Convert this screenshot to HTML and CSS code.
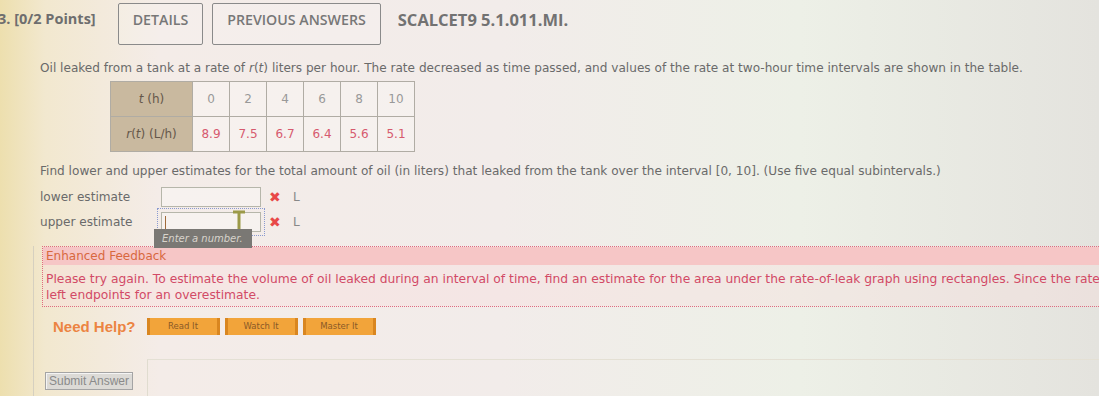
FILE: index.html
```html
<!DOCTYPE html>
<html>
<head>
<meta charset="utf-8">
<link rel="stylesheet" href="styles.css">
</head>
<body>
<div class="page">
  <div class="head">
    <span class="qnum">3. [0/2 Points]</span>
    <span class="hbtn">DETAILS</span>
    <span class="hbtn">PREVIOUS ANSWERS</span>
    <span class="code">SCALCET9 5.1.011.MI.</span>
  </div>

  <div class="content">
    <p class="intro">Oil leaked from a tank at a rate of <i>r</i>(<i>t</i>) liters per hour. The rate decreased as time passed, and values of the rate at two-hour time intervals are shown in the table.</p>

    <table class="data">
      <tr>
        <th><i>t</i> (h)</th>
        <td>0</td><td>2</td><td>4</td><td>6</td><td>8</td><td>10</td>
      </tr>
      <tr>
        <th><i>r</i>(<i>t</i>) (L/h)</th>
        <td class="val">8.9</td><td class="val">7.5</td><td class="val">6.7</td><td class="val">6.4</td><td class="val">5.6</td><td class="val">5.1</td>
      </tr>
    </table>

    <p class="find">Find lower and upper estimates for the total amount of oil (in liters) that leaked from the tank over the interval [0, 10]. (Use five equal subintervals.)</p>

    <div class="answers">
      <div class="arow">
        <span class="alabel">lower estimate</span>
        <span class="afield"><span class="input"></span></span>
        <span class="xmark">&#x2716;</span>
        <span class="unit">L</span>
      </div>
      <div class="arow">
        <span class="alabel">upper estimate</span>
        <span class="afield focus">
          <span class="input"><span class="caret"></span></span>
          <svg class="ibeam" width="14" height="30" viewBox="0 0 14 30"><path d="M1 2h12M7 2v26M1 28h12" stroke="#9c9a48" stroke-width="3" fill="none"/></svg>
          <span class="tip">Enter a number.</span>
        </span>
        <span class="xmark">&#x2716;</span>
        <span class="unit">L</span>
      </div>
    </div>
  </div>

  <div class="lower">
    <div class="feedback">
      <div class="fbhead">Enhanced Feedback</div>
      <div class="fbtext">Please try again. To estimate the volume of oil leaked during an interval of time, find an estimate for the area under the rate-of-leak graph using rectangles. Since the rate is decreasing, use right endpoints for an underestimate and<br>left endpoints for an overestimate.</div>
    </div>

    <div class="help">
      <span class="needhelp">Need Help?</span>
      <span class="hb">Read It</span>
      <span class="hb">Watch It</span>
      <span class="hb">Master It</span>
    </div>

    <div class="foot">
      <div class="submitcell"><span class="submit">Submit Answer</span></div>
      <div class="restcell"></div>
    </div>
  </div>
</div>
</body>
</html>
```

FILE: styles.css
```css
html, body {
  margin: 0;
  padding: 0;
  width: 1099px;
  height: 396px;
  overflow: hidden;
}
body {
  background: linear-gradient(90deg, #eddfae 0px, #f2e8cf 45px, #f4ece8 160px, #f2ecea 500px, #edf0e7 800px, #e4e3de 1099px);
  font-family: "DejaVu Sans", Verdana, sans-serif;
  color: #6a6a6a;
}
.page {
  position: relative;
  width: 1099px;
  height: 396px;
}
.head {
  display: flex;
  align-items: flex-start;
  height: 46px;
  font-family: "Open Sans", "Liberation Sans", sans-serif;
  font-size: 14.2px;
  font-weight: 600;
  color: #6e6e6e;
}
.qnum {
  margin-left: -2px;
  margin-top: 9px;
  margin-right: 22px;
  font-size: 14.5px;
  font-weight: 700;
}
.hbtn {
  border: 1px solid #8a8a8a;
  border-radius: 2px;
  padding: 6px 14px 15px;
  margin-top: 3px;
  margin-right: 9px;
  color: #777;
  background: rgba(255,255,255,0.15);
}
.code {
  margin-left: 8px;
  margin-top: 8px;
  font-size: 16.5px;
  font-weight: 700;
  color: #727272;
}
.content {
  padding-left: 40px;
  font-size: 12.1px;
}
.intro {
  margin: 15px 0 0;
  line-height: 15px;
}
.data {
  margin: 5px 0 0 70px;
  border-collapse: collapse;
  font-size: 12px;
}
.data th, .data td {
  border: 1.5px solid #b0aca4;
  height: 34px;
  text-align: center;
  padding: 0;
  color: #777;
}
.data th {
  width: 81px;
  background: #c9b99f;
  color: #65574a;
  font-weight: 400;
}
.data td {
  width: 36px;
  background: rgba(255,255,255,0.25);
  color: #999;
}
.data td.val {
  color: #d65a6e;
}
.find {
  margin: 12px 0 0;
  line-height: 15px;
}
.answers {
  margin-top: 5px;
}
.arow {
  display: flex;
  align-items: center;
  height: 25px;
}
.alabel {
  width: 118px;
}
.afield {
  position: relative;
  display: block;
  padding: 3px;
}
.afield.focus {
  outline: 1px dotted #8a9ad0;
  outline-offset: 0px;
}
.input {
  display: block;
  width: 98px;
  height: 18px;
  border: 1px solid #b6b6aa;
  background: rgba(255,255,255,0.3);
  position: relative;
}
.caret {
  position: absolute;
  left: 3px;
  top: 3px;
  width: 1px;
  height: 13px;
  border-left: 1px solid #a06a3a;
}
.ibeam {
  position: absolute;
  left: 74px;
  top: 1px;
}
.tip {
  position: absolute;
  left: -4px;
  top: 20px;
  background: #7a7874;
  color: #d8d4cc;
  font-size: 10px;
  font-style: italic;
  padding: 4px 9px 4px 8px;
  white-space: nowrap;
  z-index: 2;
}
.xmark {
  color: #e84848;
  font-size: 14px;
  margin-left: 5px;
  width: 24px;
}
.unit {
  color: #888;
}
.lower {
  margin-top: 12px;
  border-left: 1px solid #d6d0c0;
  margin-left: 33px;
}
.feedback {
  margin-left: 8px;
  width: 1300px;
  border-top: 1px dotted #e06a80;
  border-bottom: 1px dotted #e06a80;
  border-left: 1px dotted #e06a80;
  font-size: 12px;
}
.fbhead {
  background: #f6c6c6;
  color: #d8683f;
  padding: 2px 0 2px 3px;
  line-height: 14px;
}
.fbtext {
  color: #d24a66;
  font-size: 12.3px;
  padding: 6px 0 3px 3px;
  line-height: 16px;
  white-space: nowrap;
  background: rgba(250, 220, 220, 0.35);
}
.help {
  display: flex;
  align-items: center;
  margin-top: 11px;
  padding-left: 19px;
}
.needhelp {
  font-family: "Liberation Sans", Arial, sans-serif;
  font-weight: 700;
  font-size: 15px;
  color: #ec8442;
  margin-right: 11px;
}
.hb {
  display: block;
  width: 67px;
  height: 17px;
  line-height: 17px;
  margin-right: 5px;
  text-align: center;
  background: #f2a43a;
  border-left: 3px solid #d98620;
  border-right: 3px solid #d98620;
  font-size: 8.5px;
  color: #8a5a28;
}
.foot {
  display: flex;
  margin-top: 24px;
  height: 40px;
}
.submitcell {
  box-sizing: border-box;
  width: 113px;
  padding-top: 11px;
  padding-left: 11px;
}
.submit {
  display: inline-block;
  border: 1px solid #a4a4a4;
  background: #dcdad6;
  color: #8a8a8a;
  font-family: "Liberation Sans", Arial, sans-serif;
  font-size: 12px;
  padding: 1px 3px;
  box-shadow: inset 1px 1px 0 #f4f4f4;
}
.restcell {
  flex: 1;
  border-top: 1px solid #e4e0d4;
  border-left: 1px solid #e0dccf;
}
```
